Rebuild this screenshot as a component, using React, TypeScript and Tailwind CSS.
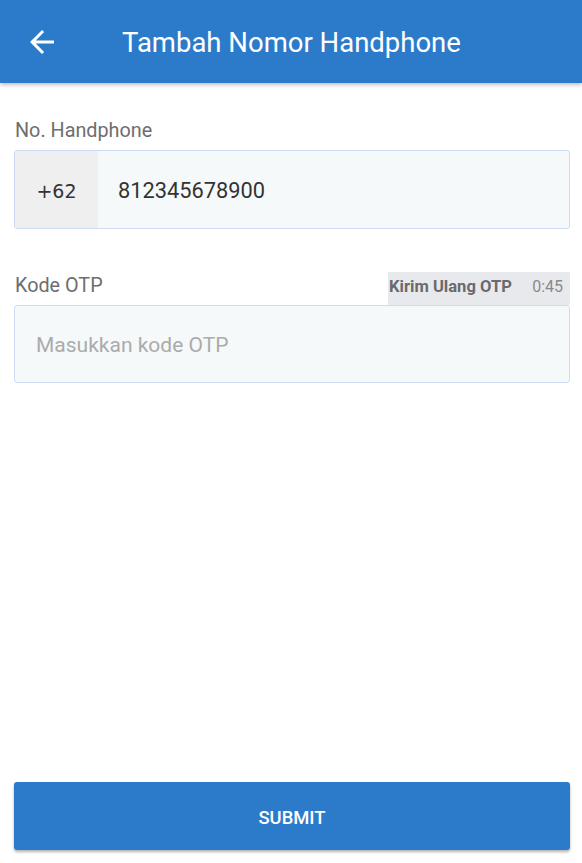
import React from "react";

export default function App() {
  return (
    <div className="w-[582px] h-[863px] bg-white flex flex-col" style={{ fontFamily: "Roboto, 'Noto Sans', sans-serif" }}>
      <header className="h-[83px] bg-[#2c7bcb] flex items-center shadow-[0_2px_4px_rgba(0,0,0,0.25)] relative z-10">
        <svg width="36" height="36" viewBox="0 0 24 24" className="ml-[24px] fill-white">
          <path d="M20 11H7.83l5.59-5.59L12 4l-8 8 8 8 1.41-1.41L7.83 13H20v-2z" />
        </svg>
        <h1 className="ml-[62px] text-white text-[27.5px] font-normal leading-none mt-[3px]">Tambah Nomor Handphone</h1>
      </header>
      <main className="flex-1 flex flex-col pl-[14px] pr-[12px]">
        <label className="mt-[37px] ml-px text-[19.8px] leading-[22px] text-[#6e6e6e]">No. Handphone</label>
        <div className="mt-[8px] h-[79px] flex border border-[#cddcf2] rounded-[3px] overflow-hidden bg-[#f6f9fa]">
          <div className="w-[83px] bg-[#efefef] flex items-center justify-center pt-[3px] text-[19px] text-[#333]" style={{ fontFamily: "'DejaVu Sans', sans-serif" }}>+62</div>
          <div className="flex items-center pl-[20px] pt-[3px] text-[21.8px] text-[#333]">812345678900</div>
        </div>
        <div className="mt-[43px] flex items-end justify-between">
          <label className="ml-px mb-[8px] text-[19.8px] leading-[22px] text-[#6e6e6e]">Kode OTP</label>
          <div className="w-[182px] h-[33px] bg-[#e8e9ec] flex items-center justify-between pl-[1px] pr-[7px] pb-[3px]">
            <span className="text-[16.6px] font-bold text-[#6a6a6e]">Kirim Ulang OTP</span>
            <span className="text-[16px] text-[#8a8a8a]">0:45</span>
          </div>
        </div>
        <div className="h-[78px] border border-[#cddcf2] rounded-[3px] bg-[#f6f9fa] flex items-center pl-[21px] pt-[3px] text-[21px] text-[#ababab]">
          Masukkan kode OTP
        </div>
        <div className="flex-1" />
        <button className="mb-[13px] h-[68px] w-full bg-[#2c7bcb] rounded-[3px] text-white text-[18.4px] font-medium pt-[3px] shadow-[0_2px_3px_rgba(0,0,0,0.3)]">SUBMIT</button>
      </main>
    </div>
  );
}
